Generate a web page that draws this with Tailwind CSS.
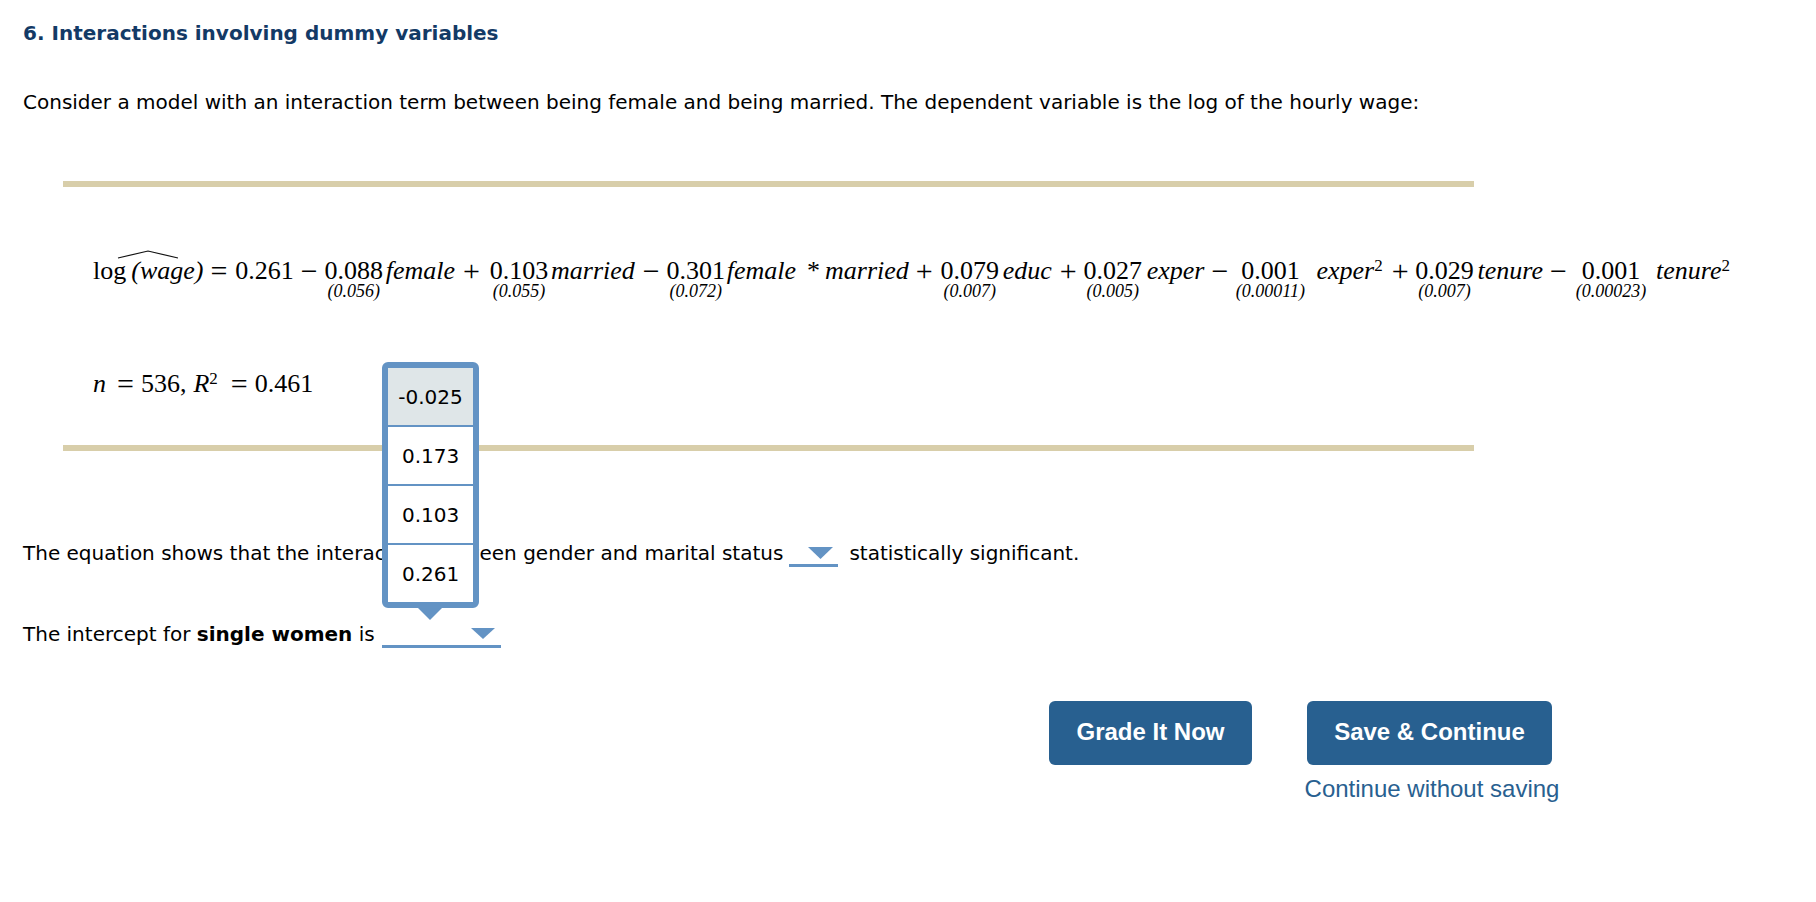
<html>
<head>
    <script src="https://cdn.jsdelivr.net/npm/@tailwindcss/browser@4"></script>
</head>
<body class="bg-white text-black font-['DejaVu_Sans',sans-serif] text-[20px] h-[902px] overflow-hidden">
<div class="pl-[23px] pt-[20px]">
    <h1 class="text-[20px] leading-[26px] font-bold text-[#133a66]">6. Interactions involving dummy variables</h1>
    <p class="mt-[43px] leading-[26px]">Consider a model with an interaction term between being female and being married. The dependent variable is the log of the hourly wage:</p>

    <div class="mt-[66px] ml-[40px] w-[1411px] h-[6px] bg-[#d8ceaa]"></div>

    <!-- equation -->
    <div class="ml-[70px] mt-[71px] h-[50px] flex items-start whitespace-nowrap font-['Liberation_Serif',serif] text-[26px] leading-[26px]">
        <span>log</span>
        <span class="relative italic ml-[5px]">(wage)
            <svg class="absolute left-[-14px] top-[-8px]" width="62" height="10" viewBox="0 0 62 10"><path d="M1 8 L31 1 L61 8" fill="none" stroke="#111" stroke-width="1.2"/></svg>
        </span>
        <span class="ml-[7px] text-[30px]">=</span>
        <span class="ml-[8px]">0.261</span>
        <span class="ml-[7px] text-[30px]">&minus;</span>
        <span class="ml-[7px] w-[58px] flex flex-col items-center"><span>0.088</span><span class="italic text-[18px] leading-[14px]">(0.056)</span></span>
        <span class="italic ml-[3px]">female</span>
        <span class="ml-[8px] text-[30px]">+</span>
        <span class="ml-[10px] w-[58px] flex flex-col items-center"><span>0.103</span><span class="italic text-[18px] leading-[14px]">(0.055)</span></span>
        <span class="italic ml-[3px]">married</span>
        <span class="ml-[8px] text-[30px]">&minus;</span>
        <span class="ml-[7px] w-[58px] flex flex-col items-center"><span>0.301</span><span class="italic text-[18px] leading-[14px]">(0.072)</span></span>
        <span class="italic ml-[2px]">female</span>
        <span class="ml-[11px]">*</span>
        <span class="italic ml-[5px]">married</span>
        <span class="ml-[7px] text-[30px]">+</span>
        <span class="ml-[8px] w-[58px] flex flex-col items-center"><span>0.079</span><span class="italic text-[18px] leading-[14px]">(0.007)</span></span>
        <span class="italic ml-[4px]">educ</span>
        <span class="ml-[8px] text-[30px]">+</span>
        <span class="ml-[7px] w-[58px] flex flex-col items-center"><span>0.027</span><span class="italic text-[18px] leading-[14px]">(0.005)</span></span>
        <span class="italic ml-[5px]">exper</span>
        <span class="ml-[7px] text-[30px]">&minus;</span>
        <span class="ml-[13px] w-[58px] flex flex-col items-center"><span>0.001</span><span class="italic text-[18px] leading-[14px]">(0.00011)</span></span>
        <span class="italic ml-[17px]">exper<sup class="not-italic text-[17px] leading-none">2</sup></span>
        <span class="ml-[9px] text-[30px]">+</span>
        <span class="ml-[7px] w-[58px] flex flex-col items-center"><span>0.029</span><span class="italic text-[18px] leading-[14px]">(0.007)</span></span>
        <span class="italic ml-[4px]">tenure</span>
        <span class="ml-[7px] text-[30px]">&minus;</span>
        <span class="ml-[15px] w-[58px] flex flex-col items-center"><span>0.001</span><span class="italic text-[18px] leading-[14px]">(0.00023)</span></span>
        <span class="italic ml-[16px]">tenure<sup class="not-italic text-[17px] leading-none">2</sup></span>
    </div>

    <div class="ml-[70px] mt-[60px] h-[32px] flex items-center font-['Liberation_Serif',serif] text-[26px] leading-[32px]">
        <span class="italic">n</span>
        <span class="ml-[11px] text-[30px]">=</span>
        <span class="ml-[7px]">536,</span>
        <span class="italic ml-[7px]">R<sup class="not-italic text-[17px] leading-none">2</sup></span>
        <span class="ml-[13px] text-[30px]">=</span>
        <span class="ml-[7px]">0.461</span>
    </div>

    <div class="mt-[45px] ml-[40px] w-[1411px] h-[6px] bg-[#d8ceaa]"></div>

    <p class="mt-[88px] leading-[28px] flex items-start whitespace-pre">The equation shows that the interaction between gender and marital status<span class="ml-[6px] w-[49px] h-[28px] border-b-[3px] border-[#6393c4] flex justify-end pr-[5px] pt-[8px]"><svg width="25" height="12" viewBox="0 0 25 12"><path d="M0 0 H25 L12.5 12 Z" fill="#6393c4"/></svg></span><span class="ml-[11px]">statistically significant.</span></p>

    <p class="mt-[53px] leading-[28px] flex items-start whitespace-pre">The intercept for <b>single women</b> is <span class="relative ml-[1px] w-[119px] h-[28px] border-b-[3px] border-[#6393c4] flex justify-end pr-[6px] pt-[8px]"><svg width="24" height="11" viewBox="0 0 24 11"><path d="M0 0 H24 L12 11 Z" fill="#6393c4"/></svg>
        <!-- open menu -->
        <span class="absolute left-0 bottom-[37px] w-[97px] border-[6px] border-[#6393c4] rounded-[6px] bg-white flex flex-col text-center leading-[59px]">
            <span class="h-[59px] bg-[#dfe6e8] border-b-2 border-[#6393c4]">-0.025</span>
            <span class="h-[59px] border-b-2 border-[#6393c4]">0.173</span>
            <span class="h-[59px] border-b-2 border-[#6393c4]">0.103</span>
            <span class="h-[57px]">0.261</span>
            <svg class="absolute left-[30px] top-[100%] mt-[6px]" width="24" height="12" viewBox="0 0 24 12"><path d="M0 0 H24 L12 12 Z" fill="#6393c4"/></svg>
        </span>
    </span></p>

    <div class="mt-[53px] ml-[1026px] flex items-start font-['Liberation_Sans',sans-serif]">
        <button class="w-[203px] h-[64px] pb-[2px] bg-[#286090] text-white text-[24px] font-bold rounded-[6px]">Grade It Now</button>
        <div class="ml-[55px] w-[245px] flex flex-col items-center">
            <button class="w-[245px] h-[64px] pb-[2px] bg-[#286090] text-white text-[24px] font-bold rounded-[6px]">Save &amp; Continue</button>
            <a class="mt-[9px] ml-[5px] text-[24px] leading-[30px] text-[#286090] whitespace-nowrap">Continue without saving</a>
        </div>
    </div>
</div>
</body>
</html>
